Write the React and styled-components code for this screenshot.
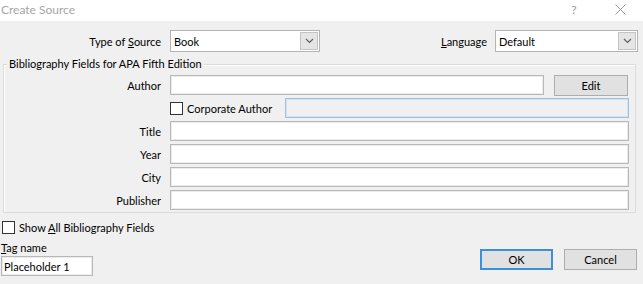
import React from 'react';
import styled, { createGlobalStyle } from 'styled-components';

const Global = createGlobalStyle`
  html, body {
    margin: 0;
    padding: 0;
    background: #f0f0f0;
  }
  body {
    font-family: Lato, "Noto Sans", sans-serif;
    font-size: 11px;
    color: #000;
  }
`;

function Chevron() {
    return (
        <svg width="9" height="6" viewBox="0 0 9 6">
            <path d="M1 1 L4.5 4.5 L8 1" fill="none" stroke="#606060" strokeWidth="1.2" />
        </svg>
    );
}

function CloseIcon() {
    return (
        <svg width="11" height="11" viewBox="0 0 11 11">
            <path d="M0.5 0.5 L10.5 10.5 M10.5 0.5 L0.5 10.5" stroke="#9a9a9a" strokeWidth="1" />
        </svg>
    );
}

function Select({ value, width }) {
    return (
        <SelectBox width={width}>
            <SelectValue>{value}</SelectValue>
            <SelectArrow>
                <Chevron />
            </SelectArrow>
        </SelectBox>
    );
}

function FieldRow({ label, children }) {
    return (
        <Row>
            <Label inGroup>{label}</Label>
            {children}
        </Row>
    );
}

export default function App() {
    return (
        <>
            <Global />
            <Dialog>
                <TitleBar>
                    <Caption>Create Source</Caption>
                    <TitleButtons>
                        <TitleGlyph>?</TitleGlyph>
                        <TitleGlyph>
                            <CloseIcon />
                        </TitleGlyph>
                    </TitleButtons>
                </TitleBar>

                <Content>
                    <TopRow>
                        <Label>
                            Type of <u>S</u>ource
                        </Label>
                        <Select value="Book" width={150} />
                        <LangLabel>
                            <u>L</u>anguage
                        </LangLabel>
                        <Select value="Default" width={143} />
                    </TopRow>

                    <Group>
                        <Legend>Bibliography Fields for APA Fifth Edition</Legend>

                        <FieldRow label="Author">
                            <TextBox grow />
                            <Button wide>Edit</Button>
                        </FieldRow>

                        <CorpRow>
                            <Spacer />
                            <Check />
                            <CheckText>Corporate Author</CheckText>
                            <DisabledBox />
                        </CorpRow>

                        <Fields>
                            <FieldRow label="Title">
                                <TextBox grow />
                            </FieldRow>
                            <FieldRow label="Year">
                                <TextBox grow />
                            </FieldRow>
                            <FieldRow label="City">
                                <TextBox grow />
                            </FieldRow>
                            <FieldRow label="Publisher">
                                <TextBox grow />
                            </FieldRow>
                        </Fields>
                    </Group>

                    <Bottom>
                        <BottomLeft>
                            <ShowAll>
                                <Check />
                                <span>
                                    Show <u>A</u>ll Bibliography Fields
                                </span>
                            </ShowAll>
                            <TagLabel>
                                <u>T</u>ag name
                            </TagLabel>
                            <TagBox>Placeholder 1</TagBox>
                        </BottomLeft>
                        <Buttons>
                            <Button primary>OK</Button>
                            <Button>Cancel</Button>
                        </Buttons>
                    </Bottom>
                </Content>
            </Dialog>
        </>
    );
}

const Dialog = styled.div`
    width: 643px;
    height: 284px;
    background: #f0f0f0;
    overflow: hidden;
`;

const TitleBar = styled.div`
    height: 21px;
    background: #fff;
    display: flex;
    align-items: center;
    justify-content: space-between;
`;

const Caption = styled.div`
    color: #a6a6a6;
    font-size: 12px;
    padding-left: 1px;
    margin-top: -2px;
`;

const TitleButtons = styled.div`
    display: flex;
    align-items: center;
    margin-top: -3px;
`;

const TitleGlyph = styled.div`
    color: #9a9a9a;
    font-size: 12px;
    width: 46px;
    height: 14px;
    display: flex;
    align-items: center;
    justify-content: center;
`;

const Content = styled.div`
    padding: 9px 6px 0 1px;
`;

const TopRow = styled.div`
    display: flex;
    align-items: center;
    height: 22px;
    margin-right: -1px;
`;

const Label = styled.div`
    width: ${p => (p.inGroup ? '157px' : '160px')};
    flex: none;
    text-align: right;
    padding-right: 9px;
    white-space: nowrap;
`;

const LangLabel = styled.div`
    margin-left: auto;
    padding-right: 8px;
`;

const SelectBox = styled.div`
    width: ${p => p.width}px;
    height: 22px;
    box-sizing: border-box;
    background: #fff;
    border: 1px solid #b4b4b4;
    display: flex;
    align-items: stretch;
`;

const SelectValue = styled.div`
    flex: 1;
    padding-left: 3px;
    display: flex;
    align-items: center;
`;

const SelectArrow = styled.div`
    width: 16px;
    background: #e5e5e5;
    border: 1px solid #c4c4c4;
    margin: 1px;
    display: flex;
    align-items: center;
    justify-content: center;
`;

const Group = styled.div`
    position: relative;
    margin: 12px 1px 0 2px;
    border: 1px solid #dcdcdc;
    box-shadow: inset 1px 1px 0 #fff;
    height: 149px;
    padding: 10px 6px 0 0;
    box-sizing: border-box;
`;

const Legend = styled.div`
    position: absolute;
    top: -9px;
    left: 3px;
    padding: 0 2px;
    background: #f0f0f0;
    line-height: 16px;
`;

const Row = styled.div`
    display: flex;
    align-items: center;
    height: 20px;
`;

const TextBox = styled.div`
    height: 20px;
    box-sizing: border-box;
    background: #fff;
    border: 1px solid #b8b8b8;
    box-shadow: inset 0 0 0 1px #ececec;
    ${p => p.grow && 'flex: 1;'}
`;

const Button = styled.div`
    height: 21px;
    box-sizing: border-box;
    width: ${p => (p.wide ? '74px' : '73px')};
    margin-left: ${p => (p.wide ? '10px' : '0')};
    margin-right: ${p => (p.wide ? '1px' : '0')};
    background: #e1e1e1;
    border: ${p => (p.primary ? '2px solid #3c8fdb' : '1px solid #adadad')};
    display: flex;
    align-items: center;
    justify-content: center;
`;

const CorpRow = styled.div`
    display: flex;
    align-items: center;
    height: 20px;
    margin-top: 3px;
`;

const Spacer = styled.div`
    width: 166px;
    flex: none;
`;

const Check = styled.div`
    width: 13px;
    height: 13px;
    box-sizing: border-box;
    border: 1px solid #333;
    background: #fff;
    flex: none;
    margin-right: 4px;
`;

const CheckText = styled.div`
    width: 98px;
    flex: none;
    white-space: nowrap;
`;

const DisabledBox = styled.div`
    flex: 1;
    height: 20px;
    box-sizing: border-box;
    border: 1px solid #9dc1e6;
    box-shadow: inset 0 0 0 1px #d3e3f3;
    background: #f0f0f0;
`;

const Fields = styled.div`
    display: flex;
    flex-direction: column;
    gap: 3px;
    margin-top: 3px;
`;

const Bottom = styled.div`
    display: flex;
    justify-content: space-between;
    align-items: flex-end;
`;

const BottomLeft = styled.div`
    display: flex;
    flex-direction: column;
    padding-top: 7px;
`;

const ShowAll = styled.div`
    display: flex;
    align-items: center;
    padding-left: 1px;
    height: 14px;
`;

const TagLabel = styled.div`
    margin-top: 6px;
    line-height: 16px;
`;

const TagBox = styled.div`
    width: 92px;
    height: 20px;
    box-sizing: border-box;
    background: #fff;
    border: 1px solid #b8b8b8;
    box-shadow: inset 0 0 0 1px #ececec;
    padding-left: 2px;
    display: flex;
    align-items: center;
`;

const Buttons = styled.div`
    display: flex;
    gap: 11px;
    margin-bottom: 6px;
`;
